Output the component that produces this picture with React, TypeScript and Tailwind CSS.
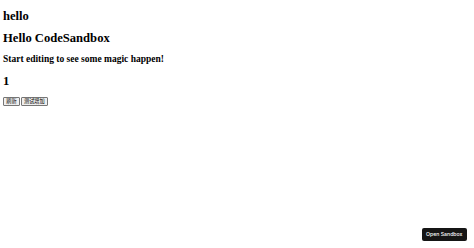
export default function App() {
  return (
    <div className="relative h-[248px] w-[474px] overflow-hidden bg-white font-['Liberation_Serif','Noto_Sans_CJK_SC',serif] text-black">
      <div className="px-[3px]">
        <h1 className="my-[8.5px] text-[12.6px] leading-[1.15] font-bold">hello</h1>
        <h1 className="my-[8.5px] text-[12.6px] leading-[1.15] font-bold">Hello CodeSandbox</h1>
        <h2 className="my-[7.9px] text-[9.5px] leading-[1.15] font-bold">Start editing to see some magic happen!</h2>
        <h1 className="my-[8.5px] text-[12.6px] leading-[1.15] font-bold">1</h1>
        <div className="flex">
          <button className="rounded-[1px] border border-[#767676] bg-[#efefef] px-[2.2px] py-[0.5px] font-['Liberation_Sans','Noto_Sans_CJK_SC',sans-serif] text-[5.2px] leading-[1.2]">
            刷新
          </button>
          <button className="ml-[1px] rounded-[1px] border border-[#767676] bg-[#efefef] px-[2.2px] py-[0.5px] font-['Liberation_Sans','Noto_Sans_CJK_SC',sans-serif] text-[5.2px] leading-[1.2]">
            测试增加
          </button>
        </div>
      </div>
      <div className="absolute right-[7px] bottom-[7px] flex h-[13px] items-center rounded-[2px] bg-[#151515] px-[4.5px] font-['Inter',sans-serif] text-[5.2px] font-medium text-white">
        Open Sandbox
      </div>
    </div>
  );
}
